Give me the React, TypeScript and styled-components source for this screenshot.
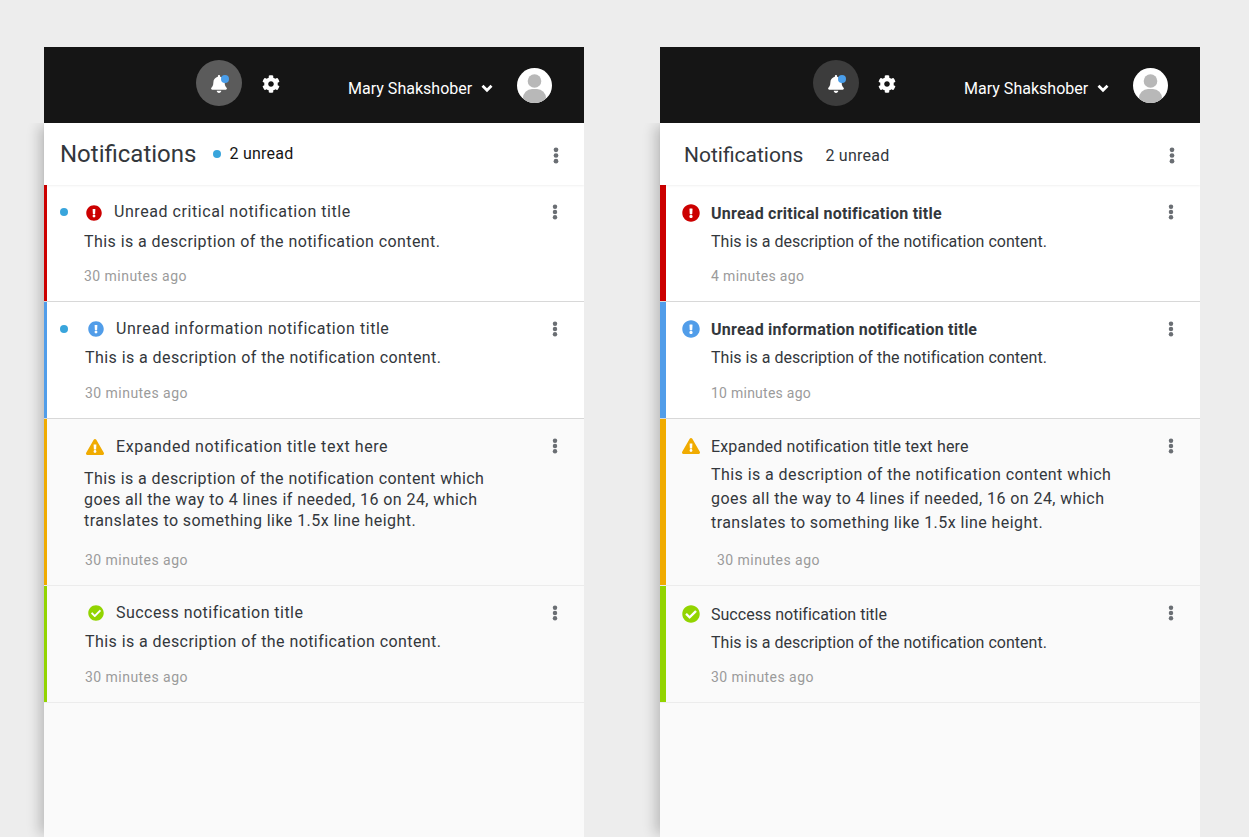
import React from "react";
import styled, { createGlobalStyle } from "styled-components";
import { FaBell, FaCog, FaExclamationCircle, FaExclamationTriangle, FaCheckCircle } from "react-icons/fa";

const Global = createGlobalStyle`
  html, body { margin: 0; padding: 0; height: 100%; background: #ededed; overflow: hidden; }
  body { font-family: Roboto, "Noto Sans", sans-serif; color: #33373c; }
`;

const Page = styled.div`
  display: grid;
  grid-template-columns: 540px 540px;
  column-gap: 76px;
  padding: 47px 49px 0 44px;
  height: 837px;
  box-sizing: border-box;
  overflow: hidden;
`;
const Panel = styled.section`
  display: flex;
  flex-direction: column;
  height: 790px;
`;
const TopBar = styled.header<{ $left: number }>`
  height: 76px;
  flex: none;
  background: #151515;
  display: flex;
  align-items: center;
  padding-left: ${(p) => p.$left}px;
  color: #fff;
`;
const BellButton = styled.div<{ $bg: string }>`
  width: 46px;
  height: 46px;
  margin-top: -4px;
  border-radius: 50%;
  background: ${(p) => p.$bg};
  display: flex;
  align-items: center;
  justify-content: center;
  position: relative;
  font-size: 18px;
  flex: none;
  padding-top: 2px;
  box-sizing: border-box;
`;
const BellDot = styled.span`
  position: absolute;
  left: 25px;
  top: 15px;
  width: 8px;
  height: 8px;
  border-radius: 50%;
  background: #4a9eea;
`;
const Gear = styled(FaCog)<{ $gap: number }>`
  font-size: 18px;
  margin-left: ${(p) => p.$gap}px;
  margin-top: -3px;
  flex: none;
`;
const UserName = styled.span`
  margin-left: 68px;
  width: 133px;
  flex: none;
  font-size: 16px;
  letter-spacing: 0.02px;
  line-height: 24px;
  padding-top: 7px;
  white-space: nowrap;
`;
const ChevronSvg = styled.svg`
  width: 12px;
  height: 12px;
  margin-top: 5px;
  flex: none;
  fill: none;
  stroke: #fff;
  stroke-width: 2.8;
`;
const AvatarWrap = styled.div`
  margin-left: 24px;
  width: 35px;
  height: 35px;
  margin-top: 1px;
  flex: none;
`;
const Body = styled.div`
  flex: 1;
  background: #fafafa;
  box-shadow: -8px 0 12px -3px rgba(0, 0, 0, 0.2);
  clip-path: inset(0 0 0 -30px);
  display: flex;
  flex-direction: column;
`;
const PanelHead = styled.div<{ $left: number }>`
  height: 62px;
  flex: none;
  background: #fff;
  display: flex;
  align-items: center;
  padding-left: ${(p) => p.$left}px;
  padding-right: 25px;
  box-shadow: 0 1px 2px rgba(0, 0, 0, 0.06);
  position: relative;
  z-index: 1;
`;
const PanelTitle = styled.h2<{ $size: number; $gap: number; $shift: number }>`
  margin: ${(p) => p.$shift * 2}px ${(p) => p.$gap}px 0 0;
  font-weight: 400;
  font-size: ${(p) => p.$size}px;
  color: #33373c;
  white-space: nowrap;
`;
const UnreadDot = styled.span<{ $shift?: number }>`
  width: 8px;
  height: 8px;
  border-radius: 50%;
  background: #39a5dc;
  flex: none;
  margin-top: ${(p) => (p.$shift ?? 0) * 2}px;
`;
const HeadDot = styled(UnreadDot)`
  margin-right: 8px;
`;
const Unread = styled.span<{ $color: string; $shift: number }>`
  margin-top: ${(p) => p.$shift * 2}px;
  font-size: 16px;
  letter-spacing: 0.25px;
  color: ${(p) => p.$color};
  white-space: nowrap;
`;
const Spacer = styled.span`
  flex: 1;
`;
const Row = styled.article<{ $h: number; $accent: string; $bar: number; $muted?: boolean; $line: string }>`
  height: ${(p) => p.$h}px;
  box-sizing: border-box;
  flex: none;
  background: ${(p) => (p.$muted ? "#fafafa" : "#fff")};
  border-bottom: 1px solid ${(p) => p.$line};
  position: relative;
  padding-left: ${(p) => p.$bar}px;
  &::before {
    content: "";
    position: absolute;
    left: 0;
    top: 0;
    bottom: 0;
    width: ${(p) => p.$bar}px;
    background: ${(p) => p.$accent};
  }
`;
const RowHead = styled.div<{ $left: number; $right: number; $top: number }>`
  display: flex;
  align-items: center;
  height: 24px;
  padding: ${(p) => p.$top}px ${(p) => p.$right}px 0 ${(p) => p.$left}px;
`;
const RowDot = styled(UnreadDot)`
  margin-right: 18px;
`;
const IconBox = styled.span<{ $color: string; $size: number; $gap: number; $ml: number }>`
  display: inline-flex;
  color: ${(p) => p.$color};
  font-size: ${(p) => p.$size}px;
  margin-left: ${(p) => p.$ml}px;
  margin-right: ${(p) => p.$gap}px;
  flex: none;
  background: radial-gradient(circle, #fff 0 35%, transparent 36%);
`;
const RowTitle = styled.h3<{ $bold?: boolean; $spacing: number; $shift: number }>`
  margin: ${(p) => p.$shift * 2}px 0 0;
  flex: 1;
  font-size: 16px;
  line-height: 24px;
  font-weight: ${(p) => (p.$bold ? 700 : 400)};
  letter-spacing: ${(p) => p.$spacing}px;
  color: #33373c;
  white-space: nowrap;
`;
const Desc = styled.p<{ $left: number; $top: number; $line: number; $spacing: number }>`
  margin: ${(p) => p.$top}px 0 0 ${(p) => p.$left}px;
  width: 420px;
  font-size: 16px;
  line-height: ${(p) => p.$line}px;
  letter-spacing: ${(p) => p.$spacing}px;
  color: #33373c;
`;
const Time = styled.div<{ $left: number; $top: number; $spacing: number }>`
  margin: ${(p) => p.$top}px 0 0 ${(p) => p.$left}px;
  font-size: 14px;
  line-height: 20px;
  letter-spacing: ${(p) => p.$spacing}px;
  color: #9b9b9b;
`;
const KebabSvg = styled.svg<{ $shift: number; $h: number }>`
  width: 6px;
  height: ${(p) => p.$h}px;
  margin-top: ${(p) => p.$shift * 2}px;
  fill: #6a6e73;
  flex: none;
`;

const Kebab = ({ shift = 0, h = 16 }: { shift?: number; h?: number }) => (
  <KebabSvg viewBox="0 0 6 18" $shift={shift} $h={h} preserveAspectRatio="xMidYMid meet">
    <circle cx="3" cy="3" r="2.5" />
    <circle cx="3" cy="9" r="2.5" />
    <circle cx="3" cy="15" r="2.5" />
  </KebabSvg>
);

const Chevron = () => (
  <ChevronSvg viewBox="0 0 12 12">
    <polyline points="1.5,3.8 6,8.2 10.5,3.8" />
  </ChevronSvg>
);

const Avatar = () => (
  <AvatarWrap>
    <svg width="35" height="35" viewBox="0 0 35 35">
      <defs>
        <clipPath id="av"><circle cx="17.5" cy="17.5" r="17.5" /></clipPath>
      </defs>
      <circle cx="17.5" cy="17.5" r="17.5" fill="#fff" />
      <g clipPath="url(#av)">
        <circle cx="17.5" cy="13" r="6.8" fill="#b8b8b8" />
        <rect x="6" y="21" width="23" height="18" rx="9" fill="#b8b8b8" />
      </g>
    </svg>
  </AvatarWrap>
);

const RED = "#cc0000";
const BLUE = "#519de9";
const GOLD = "#f0ab00";
const GREEN = "#92d400";

type N = {
  title: string; desc: string; time: string; accent: string; Icon: React.ComponentType;
  h: number; muted?: boolean; dot?: boolean; bold?: boolean; line: string;
  ml: number; size: number; gap: number; dl: number; dt: number; lh: number; tl: number; tt: number; top: number;
  ts: number; ds: number; ms: number; titleShift: number; kebabShift: number; dotShift?: number;
};

const SHORT = "This is a description of the notification content.";
const LONG = "This is a description of the notification content which goes all the way to 4 lines if needed, 16 on 24, which translates to something like 1.5x line height.";

const leftRows: N[] = [
  { title: "Unread critical notification title", desc: SHORT, time: "30 minutes ago", accent: RED, Icon: FaExclamationCircle, h: 117, dot: true, dotShift: -1, line: "#d8d8d8", ml: 0, size: 16, gap: 12, dl: 37, dt: 5, lh: 24, tl: 37, tt: 12, top: 16, ts: 0.56, ds: 0.43, ms: 0.46, titleShift: -1, kebabShift: -1 },
  { title: "Unread information notification title", desc: SHORT, time: "30 minutes ago", accent: BLUE, Icon: FaExclamationCircle, h: 117, dot: true, line: "#d8d8d8", ml: 2, size: 16, gap: 12, dl: 38, dt: 5, lh: 24, tl: 38, tt: 13, top: 15, ts: 0.56, ds: 0.43, ms: 0.46, titleShift: 0, kebabShift: 0 },
  { title: "Expanded notification title text here", desc: LONG, time: "30 minutes ago", accent: GOLD, Icon: FaExclamationTriangle, h: 167, muted: true, line: "#ececec", ml: 39, size: 18, gap: 12, dl: 37, dt: 9, lh: 21, tl: 38, tt: 19, top: 16, ts: 0.56, ds: 0.43, ms: 0.46, titleShift: 0, kebabShift: -1 },
  { title: "Success notification title", desc: SHORT, time: "30 minutes ago", accent: GREEN, Icon: FaCheckCircle, h: 117, muted: true, line: "#ececec", ml: 41, size: 16, gap: 12, dl: 38, dt: 5, lh: 24, tl: 38, tt: 13, top: 15, ts: 0.46, ds: 0.43, ms: 0.46, titleShift: 0, kebabShift: 0 },
];
const rightRows: N[] = [
  { title: "Unread critical notification title", desc: SHORT, time: "4 minutes ago", accent: RED, Icon: FaExclamationCircle, h: 117, bold: true, line: "#d8d8d8", ml: 16, size: 18, gap: 11, dl: 45, dt: 5, lh: 24, tl: 45, tt: 12, top: 16, ts: 0.24, ds: 0.02, ms: 0.37, titleShift: 1, kebabShift: -1 },
  { title: "Unread information notification title", desc: SHORT, time: "10 minutes ago", accent: BLUE, Icon: FaExclamationCircle, h: 117, bold: true, line: "#d8d8d8", ml: 16, size: 18, gap: 11, dl: 45, dt: 5, lh: 24, tl: 45, tt: 13, top: 15, ts: 0.24, ds: 0.02, ms: 0.25, titleShift: 1, kebabShift: 0 },
  { title: "Expanded notification title text here", desc: LONG, time: "30 minutes ago", accent: GOLD, Icon: FaExclamationTriangle, h: 167, muted: true, line: "#ececec", ml: 16, size: 18, gap: 11, dl: 45, dt: 5, lh: 24, tl: 51, tt: 15, top: 15, ts: 0.17, ds: 0.43, ms: 0.46, titleShift: 1, kebabShift: 0 },
  { title: "Success notification title", desc: SHORT, time: "30 minutes ago", accent: GREEN, Icon: FaCheckCircle, h: 117, muted: true, line: "#ececec", ml: 16, size: 18, gap: 11, dl: 45, dt: 5, lh: 24, tl: 45, tt: 12, top: 16, ts: 0.02, ds: 0.02, ms: 0.46, titleShift: 1, kebabShift: -1 },
];

const NotificationRow = ({ n, bar, head }: { n: N; bar: number; head: number }) => (
  <Row $h={n.h} $accent={n.accent} $bar={bar} $muted={n.muted} $line={n.line}>
    <RowHead $left={n.dot ? head : 0} $right={26} $top={n.top}>
      {n.dot && <RowDot $shift={n.dotShift} />}
      <IconBox $color={n.accent} $size={n.size} $gap={n.gap} $ml={n.ml}><n.Icon /></IconBox>
      <RowTitle $bold={n.bold} $spacing={n.ts} $shift={n.titleShift}>{n.title}</RowTitle>
      <Kebab shift={n.kebabShift} />
    </RowHead>
    <Desc $left={n.dl} $top={n.dt} $line={n.lh} $spacing={n.ds}>{n.desc}</Desc>
    <Time $left={n.tl} $top={n.tt} $spacing={n.ms}>{n.time}</Time>
  </Row>
);

const Bar = ({ bg, left, gearGap }: { bg: string; left: number; gearGap: number }) => (
  <TopBar $left={left}>
    <BellButton $bg={bg}><FaBell /><BellDot /></BellButton>
    <Gear $gap={gearGap} />
    <UserName>Mary Shakshober</UserName>
    <Chevron />
    <Avatar />
  </TopBar>
);

export default function App() {
  return (
    <>
      <Global />
      <Page>
        <Panel>
          <Bar bg="#5b5b5b" left={152} gearGap={20} />
          <Body>
            <PanelHead $left={16}>
              <PanelTitle $size={24} $gap={17} $shift={0}>Notifications</PanelTitle>
              <HeadDot />
              <Unread $color="#151515" $shift={-1}>2 unread</Unread>
              <Spacer />
              <Kebab shift={1} h={17} />
            </PanelHead>
            {leftRows.map((n) => <NotificationRow key={n.title} n={n} bar={3} head={13} />)}
          </Body>
        </Panel>
        <Panel>
          <Bar bg="#3c3c3c" left={153} gearGap={19} />
          <Body>
            <PanelHead $left={24}>
              <PanelTitle $size={21} $gap={22} $shift={1}>Notifications</PanelTitle>
              <Unread $color="#33373c" $shift={1}>2 unread</Unread>
              <Spacer />
              <Kebab shift={1} h={17} />
            </PanelHead>
            {rightRows.map((n) => <NotificationRow key={n.title} n={n} bar={6} head={0} />)}
          </Body>
        </Panel>
      </Page>
    </>
  );
}
